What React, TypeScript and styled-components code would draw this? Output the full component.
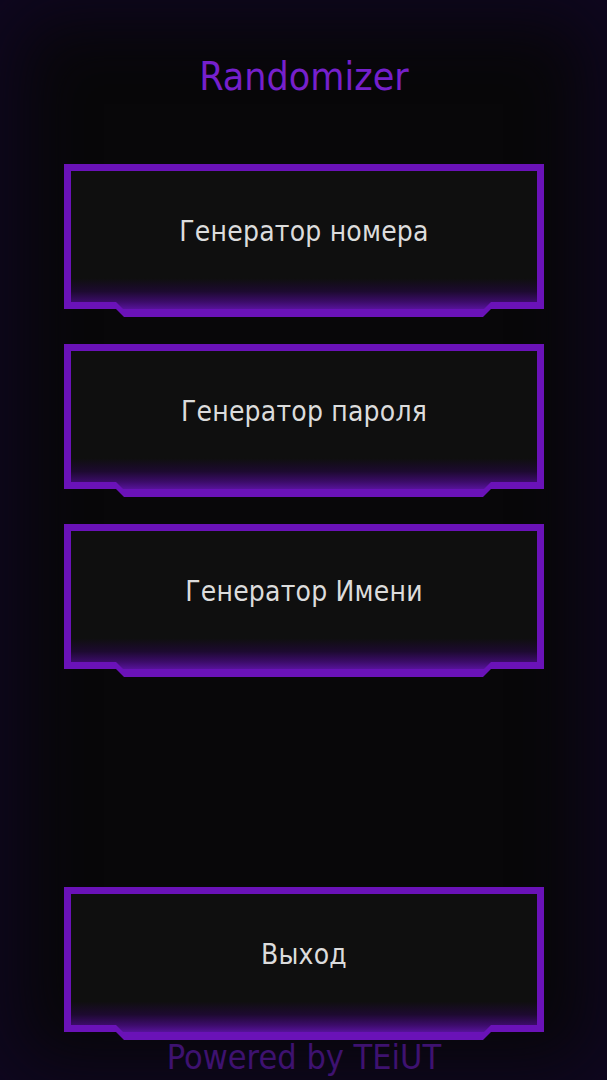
import styled, { createGlobalStyle } from "styled-components";

const purple = "#6a12b8";

const GlobalStyle = createGlobalStyle`
  html, body {
    margin: 0;
    padding: 0;
    background: #080709;
  }
  * {
    box-sizing: border-box;
  }
`;

const Page = styled.div`
  height: 100vh;
  display: flex;
  flex-direction: column;
  padding: 52px 63px 6px 64px;
  background: #080709;
  box-shadow: inset 0 0 70px 20px #0f0720;
  font-family: "DejaVu Sans Condensed", "DejaVu Sans", sans-serif;
`;

const Title = styled.h1`
  margin: 0;
  height: 50px;
  line-height: 50px;
  text-align: center;
  font-size: 39px;
  font-weight: normal;
  color: #7620cc;
`;

const Menu = styled.div`
  margin-top: 62px;
  display: flex;
  flex-direction: column;
  gap: 35px;
`;

const Spacer = styled.div`
  flex: 1;
`;

const FrameButton = styled.button`
  position: relative;
  width: 100%;
  height: 145px;
  padding: 0 0 10px;
  border: 7px solid ${purple};
  background: linear-gradient(
    to bottom,
    #0f0f0f 0%,
    #0f0f0f 82%,
    #1d0a30 92%,
    #3c0c6a 100%
  );
  color: #dcdcdc;
  font-family: inherit;
  font-size: 28px;
  letter-spacing: 0.2px;
  cursor: pointer;

  &::before,
  &::after {
    content: "";
    position: absolute;
    left: 45px;
    right: 46px;
    height: 8px;
    clip-path: polygon(0 0, 100% 0, calc(100% - 8px) 100%, 8px 100%);
  }

  &::before {
    top: 100%;
    background: linear-gradient(to bottom, #3c0c6a, #5a14a0);
  }

  &::after {
    top: calc(100% + 7px);
    background: ${purple};
  }
`;

const Footer = styled.div`
  margin-top: 8px;
  height: 34px;
  line-height: 34px;
  text-align: center;
  font-size: 34px;
  color: #3e1270;
`;

const items = ["Генератор номера", "Генератор пароля", "Генератор Имени"];

export default function App() {
  return (
    <>
      <GlobalStyle />
      <Page>
        <Title>Randomizer</Title>
        <Menu>
          {items.map((label) => (
            <FrameButton key={label}>{label}</FrameButton>
          ))}
        </Menu>
        <Spacer />
        <FrameButton>Выход</FrameButton>
        <Footer>Powered by TEiUT</Footer>
      </Page>
    </>
  );
}
